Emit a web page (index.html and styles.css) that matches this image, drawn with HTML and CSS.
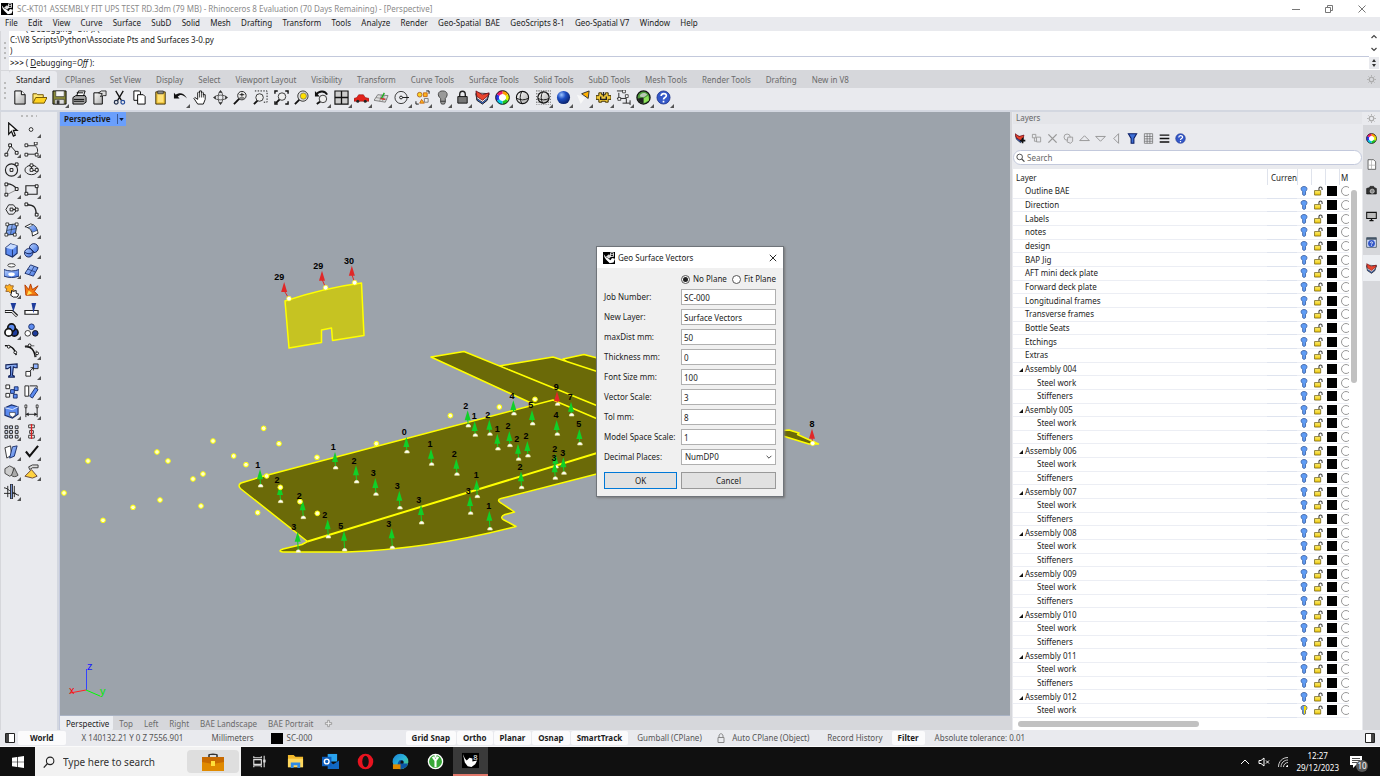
FILE: index.html
```
<!DOCTYPE html>
<html lang="en">
<head>
<meta charset="utf-8">
<title>SC-KT01 ASSEMBLY FIT UPS TEST RD.3dm - Rhinoceros 8</title>
<link rel="stylesheet" href="styles.css">
</head>
<body>
<svg class="sprite" aria-hidden="true">
  <defs>
    <linearGradient id="gBlue" x1="0" y1="0" x2="1" y2="1"><stop offset="0" stop-color="#b9d2ff"/><stop offset="1" stop-color="#3d6fe0"/></linearGradient>
    <radialGradient id="gBall" cx=".35" cy=".3" r=".8"><stop offset="0" stop-color="#9cc4ff"/><stop offset=".4" stop-color="#1d4fc4"/><stop offset="1" stop-color="#061a5c"/></radialGradient>
    <linearGradient id="gYel" x1="0" y1="0" x2="0" y2="1"><stop offset="0" stop-color="#fff27a"/><stop offset="1" stop-color="#ecc400"/></linearGradient>
    <linearGradient id="gGrey" x1="0" y1="0" x2="1" y2="1"><stop offset="0" stop-color="#fff"/><stop offset="1" stop-color="#aaa"/></linearGradient>
    <linearGradient id="gEdge" x1="0" y1="0" x2="1" y2="1"><stop offset="0" stop-color="#1b7fd6"/><stop offset=".5" stop-color="#2bb5d8"/><stop offset="1" stop-color="#5fd45a"/></linearGradient>
  </defs>
  <symbol id="rhino" viewBox="0 0 16 16"><path d="M0 0h16v16H0z" fill="#000"/><path d="M1 3l1 4 2 3 5 5 5-1 2-5-4-1-2 3-4-3-2-1z" fill="#fff"/><path d="M4 6l4-3 3 3-3 3z" fill="#ddd"/><path d="M10 1h4v5h-4zM10 3.500h4" stroke="#fff" fill="none"/></symbol>
  <symbol id="new" viewBox="0 0 16 16"><path d="M3 1h7l4 4v10H3z" fill="url(#gGrey)" stroke="#000"/><path d="M10 1v4h4" fill="#fff" stroke="#000"/></symbol>
  <symbol id="open" viewBox="0 0 16 16"><path d="M1 14V4h4l1 1h6v3" fill="#ffe873" stroke="#705300"/><path d="M1 14l3-6h12l-3 6z" fill="#ffd21f" stroke="#705300"/></symbol>
  <symbol id="save" viewBox="0 0 16 16"><path d="M1 1h14v14H1z" fill="#8a8a3a" stroke="#000"/><path d="M4 1h9v6H4z" fill="#f5f5f5" stroke="#222" stroke-width=".6"/><path d="M3 10h10v5H3z" fill="#ddd" stroke="#222" stroke-width=".6"/><path d="M5 11h3v4H5z" fill="#333"/></symbol>
  <symbol id="print" viewBox="0 0 16 16"><path d="M5 6l2-5h7l-2 6z" fill="#fff" stroke="#000"/><path d="M1 8l3-2h10l1 2v5l-3 2H1z" fill="#aaa" stroke="#000"/><path d="M2 10h11M2 12h11M5 3h7" stroke="#000"/></symbol>
  <symbol id="props" viewBox="0 0 16 16"><path d="M2 3h9v12H2z" fill="url(#gGrey)" stroke="#000"/><path d="M7 3l3-2h5v5h-3L9 7l2-3z" fill="#ddd" stroke="#000" stroke-width=".8"/></symbol>
  <symbol id="cut" viewBox="0 0 16 16"><path d="M4 1l6 10M12 1L6 11" stroke="#111" stroke-width="1.400"/><circle cx="4.500" cy="13" r="2" fill="none" stroke="#222f4a" stroke-width="1.300"/><circle cx="11.500" cy="13" r="2" fill="none" stroke="#234a9a" stroke-width="1.300"/></symbol>
  <symbol id="copy" viewBox="0 0 16 16"><path d="M2 1h6l1 1v9H2z" fill="#fff" stroke="#000"/><path d="M6 5h6l2 2v8H6z" fill="#fff" stroke="#000"/></symbol>
  <symbol id="paste" viewBox="0 0 16 16"><path d="M3 2h10v13H3z" fill="#f3c83e" stroke="#3b2c00"/><path d="M5 4h6v9H5z" fill="#ffe27a"/><path d="M5 1h6v3H5z" fill="#888" stroke="#222" stroke-width=".7"/></symbol>
  <symbol id="undo" viewBox="0 0 16 16"><path d="M1 3v6h6L5 7c3-3 6-2 10 2C12 3 7 2 3 5z" fill="#111"/></symbol>
  <symbol id="hand" viewBox="0 0 16 16"><path d="M5 15L1 9l1-1 3 2V3l1-1 1 1V1h2v2l1-1 1 1v2l2 0v5l-2 5z" fill="#fff" stroke="#111"/><path d="M7 3v5M9 3v5M11 4v4" stroke="#111" stroke-width=".8"/></symbol>
  <symbol id="rotate" viewBox="0 0 16 16"><ellipse cx="8" cy="8" rx="6.500" ry="2.500" fill="none" stroke="#555"/><ellipse cx="8" cy="8" rx="2.500" ry="6.500" fill="none" stroke="#555"/><path d="M0 8l3-2v4zM16 8l-3-2v4zM8 0l2 3H6zM8 16l2-3H6z" fill="#333"/></symbol>
  <symbol id="zoom" viewBox="0 0 16 16"><path d="M7 9l-6 6" stroke="#111" stroke-width="2"/><circle cx="9.500" cy="6" r="4.500" fill="#eee" stroke="#222"/><path d="M7 5h5M9.500 3v4M7 8.500h5" stroke="#111"/></symbol>
  <symbol id="zoomwin" viewBox="0 0 16 16"><path d="M2 1h13v12H10" fill="none" stroke="#111" stroke-dasharray="1.500 1.500"/><path d="M5 11l-4 4" stroke="#111" stroke-width="2"/><circle cx="7" cy="8" r="4" fill="#eee" stroke="#333"/></symbol>
  <symbol id="zoomext" viewBox="0 0 16 16"><path d="M1 4V1h3M12 1h3v3M15 12v3h-3M4 15H1v-3" fill="none" stroke="#111" stroke-width="1.500"/><path d="M6 10l-4 4" stroke="#111" stroke-width="2"/><circle cx="8.500" cy="7" r="4" fill="#eee" stroke="#333"/></symbol>
  <symbol id="zoomsel" viewBox="0 0 16 16"><path d="M6 10l-5 5" stroke="#111" stroke-width="2"/><circle cx="9.500" cy="6.500" r="5.500" fill="#ddd" stroke="#333"/><circle cx="10" cy="6.500" r="3.300" fill="#ffe000" stroke="#555" stroke-width=".6"/></symbol>
  <symbol id="zoomprev" viewBox="0 0 16 16"><path d="M2 5C6 0 12 1 14 5" fill="none" stroke="#111" stroke-width="2"/><path d="M1 1v6h5z" fill="#111"/><path d="M7 12l-4 3" stroke="#111" stroke-width="2"/><circle cx="9.500" cy="9.500" r="4" fill="#eee" stroke="#333"/></symbol>
  <symbol id="views" viewBox="0 0 16 16"><path d="M1 1h14v14H1z" fill="#ccc" stroke="#111" stroke-width="1.200"/><path d="M8 1v14M1 8h14" stroke="#111" stroke-width="1.400"/></symbol>
  <symbol id="car" viewBox="0 0 16 16"><path d="M0 9l3-1 2-3h5l2 3 4 1v3H0z" fill="#e2231a" stroke="#7b0000" stroke-width=".5"/><circle cx="4" cy="12" r="1.600" fill="#222"/><circle cx="12" cy="12" r="1.600" fill="#222"/></symbol>
  <symbol id="cplane" viewBox="0 0 16 16"><path d="M4 5l11 1-3 7-12-2z" fill="#ddd" stroke="#555" stroke-width=".7"/><path d="M2 8l12 2M8 5l-2 7M11 6l-2 6" stroke="#777" stroke-width=".7"/><path d="M7 9l5 1" stroke="#d22" stroke-width="1.500"/><path d="M8 9l3-6" stroke="#2a2" stroke-width="1.500"/></symbol>
  <symbol id="target" viewBox="0 0 16 16"><circle cx="7.500" cy="8" r="6.500" fill="none" stroke="#333"/><circle cx="7.500" cy="8" r="1.500" fill="#fff" stroke="#111"/><path d="M9 8h7" stroke="#111"/></symbol>
  <symbol id="selobj" viewBox="0 0 16 16"><path d="M1 12v3h3M12 1h3v3" fill="none" stroke="#111"/><circle cx="5" cy="5" r="2.500" fill="#ffd21f" stroke="#a63"/><path d="M9 3h4v4H9zM5 14l2-4 3 4z" fill="#ffb31f" stroke="#b50" stroke-width=".8"/><path d="M10 9h4v4h-4z" fill="#eee" stroke="#777"/></symbol>
  <symbol id="bulb" viewBox="0 0 16 16"><path d="M8 1c6 0 6 5 3 8v4l-1 2H7l-1-2V9C2 6 3 1 8 1z" fill="#999" stroke="#444"/><path d="M6 12h5" stroke="#333"/></symbol>
  <symbol id="lock" viewBox="0 0 16 16"><path d="M5 8V5c0-5 6-5 6 0v3" fill="none" stroke="#222" stroke-width="1.500"/><path d="M3 7h10v7H3z" fill="#777" stroke="#111"/></symbol>
  <symbol id="layers" viewBox="0 0 16 16"><path d="M1 4l1 7 6 4 5-4 2-7z" fill="#3a6bd8" stroke="#111"/><path d="M1 3l1 6 6 4 5-4 2-5z" fill="#fff" stroke="#111" stroke-width=".7"/><path d="M1 1l7 4 7-2-1 3-6 5-6-4z" fill="#e8452c" stroke="#601" stroke-width=".8"/></symbol>
  <symbol id="wheel" viewBox="0 0 16 16"><circle cx="8" cy="8" r="4" fill="#fff"/><g fill="none" stroke-width="3.500"><path d="M8 2.500A5.500 5.500 0 0 1 12.800 5.200" stroke="#ff9d00"/><path d="M12.800 5.200A5.500 5.500 0 0 1 12.800 10.800" stroke="#e6ee00"/><path d="M12.800 10.800A5.500 5.500 0 0 1 8 13.500" stroke="#20c820"/><path d="M8 13.500A5.500 5.500 0 0 1 3.200 10.800" stroke="#00c8e8"/><path d="M3.200 10.800A5.500 5.500 0 0 1 3.200 5.200" stroke="#2536e8"/><path d="M3.200 5.200A5.500 5.500 0 0 1 8 2.500" stroke="#ee1a6a"/></g><circle cx="8" cy="8" r="7.300" fill="none" stroke="#111"/></symbol>
  <symbol id="wire" viewBox="0 0 16 16"><circle cx="8" cy="8" r="6.500" fill="url(#gGrey)" stroke="#111" stroke-width="1.200"/><path d="M7 2c-2 4-2 8 0 12M2 9c4 2 8 2 12 0" fill="none" stroke="#111"/></symbol>
  <symbol id="shade" viewBox="0 0 16 16"><path d="M0 1h16M0 4h16M0 7h16M0 10h16M0 13h16M0 16h16" stroke="#555" stroke-dasharray="1.500 1"/><circle cx="8" cy="8" r="6" fill="url(#gGrey)" stroke="#111" stroke-width="1.200"/><path d="M7 2c-2 4-2 8 0 12M2 9c4 2 8 2 12 0" fill="none" stroke="#111"/></symbol>
  <symbol id="ball" viewBox="0 0 16 16"><circle cx="8" cy="8" r="7" fill="url(#gBall)"/></symbol>
  <symbol id="spot" viewBox="0 0 16 16"><path d="M1 5l9 3-5 7z" fill="#f8f8f8"/><path d="M6 4l8-3-1 8z" fill="#ffb000" stroke="#333"/></symbol>
  <symbol id="gear" viewBox="0 0 16 16"><path d="M0 6h3V3h3V5h4V3h3v3h3v4h-3v3h-3v-1H6v1H3v-3H0z" fill="#f0c83a" stroke="#3b2c00"/><path d="M5 7v3h6V7M8 2v5" fill="none" stroke="#222" stroke-width="1.500"/></symbol>
  <symbol id="dims" viewBox="0 0 16 16"><path d="M3 3v6h8v5M1 1h7M1 9h4M7 14h8M15 11v5" fill="none" stroke="#222"/><path d="M7 0h3v3H7zM10 5h3v3h-3zM2 8h3v3H2z" fill="#fff" stroke="#222" stroke-width=".8"/></symbol>
  <symbol id="grass" viewBox="0 0 16 16"><circle cx="8" cy="8" r="7" fill="#4d9a3a" stroke="#111" stroke-width="1.400"/><path d="M4 7c0-4 6-5 8-2L8 8z" fill="#b9c9b5"/><path d="M8 9l5-3 1 5-6 3z" fill="#8fe25a"/><path d="M2 9l6-1v6C4 14 2 12 2 9z" fill="#222"/></symbol>
  <symbol id="help" viewBox="0 0 16 16"><circle cx="8" cy="8" r="7" fill="#3458c8" stroke="#182f88" stroke-width=".8"/><path d="M5.500 6.500C5.500 3 11 3 11 6c0 2-3 2-3 4M8 11.500v1.800" fill="none" stroke="#fff" stroke-width="1.800"/></symbol>

  <symbol id="arrow" viewBox="0 0 16 16"><path d="M5 1v12l3-3 2 5 2-1-2-5h4z" fill="#fff" stroke="#111" stroke-width="1.300"/></symbol>
  <symbol id="point" viewBox="0 0 16 16"><circle cx="7.500" cy="8" r="2" fill="#fff" stroke="#222"/></symbol>
  <symbol id="pline" viewBox="0 0 16 16"><path d="M2 14L7 4l7 8" fill="none" stroke="#222"/><path d="M1 12h3v3H1zM5 2h3v3H5zM12 10h3v3h-3z" fill="#fff" stroke="#111"/></symbol>
  <symbol id="curve" viewBox="0 0 16 16"><path d="M3 4h9M3 13h8c6-1 3-8 1-9" fill="none" stroke="#222"/><path d="M1 2h3v3H1zM1 12h3v3H1zM12 12h3v3h-3zM11 0h3v3h-3z" fill="#fff" stroke="#111" stroke-width=".9"/></symbol>
  <symbol id="circle" viewBox="0 0 16 16"><circle cx="8" cy="8.500" r="6.500" fill="none" stroke="#222" stroke-width="1.200"/><path d="M6.500 7h3v3h-3zM12 1h3v3h-3z" fill="#fff" stroke="#111"/></symbol>
  <symbol id="ellipse" viewBox="0 0 16 16"><ellipse cx="8" cy="8.500" rx="7" ry="5" fill="none" stroke="#222"/><path d="M8 3v6h6" fill="none" stroke="#222"/><path d="M6.500 2h3v3h-3zM6.500 7h3v3h-3zM12 7h3v3h-3z" fill="#fff" stroke="#111" stroke-width=".9"/></symbol>
  <symbol id="arc" viewBox="0 0 16 16"><path d="M2 2v12l12-6" fill="none" stroke="#888"/><path d="M3 2c6 0 9 3 11 6" fill="none" stroke="#222" stroke-width="1.300"/><path d="M1 1h3v3H1zM1 12h3v3H1zM12 6h3v3h-3z" fill="#fff" stroke="#111"/></symbol>
  <symbol id="rect" viewBox="0 0 16 16"><path d="M2 4h12v9H2z" fill="none" stroke="#222" stroke-width="1.200"/><path d="M1 11h3v3H1zM12 3h3v3h-3z" fill="#fff" stroke="#111"/></symbol>
  <symbol id="hex" viewBox="0 0 16 16"><path d="M5 3h5l4 5-4 5H5L2 8z" fill="none" stroke="#222"/><path d="M8 8h5" stroke="#222"/><path d="M6.500 6.500h3v3h-3zM12 6.500h3v3h-3z" fill="#fff" stroke="#111"/></symbol>
  <symbol id="fillet" viewBox="0 0 16 16"><path d="M3 3c8 0 10 3 10 11" fill="none" stroke="#222" stroke-width="1.500"/><path d="M1 1h3v3H1zM12 12h3v3h-3z" fill="#fff" stroke="#111"/></symbol>
  <symbol id="srfpts" viewBox="0 0 16 16"><path d="M4 3l10-1-2 11-10 1z" fill="url(#gBlue)" stroke="#234"/><path d="M9 2L7 13M3 9l10-2" stroke="#234" stroke-width=".7"/><path d="M2 1h3v3H2zM12 1h3v3h-3zM1 12h3v3H1zM10 12h3v3h-3z" fill="#fff" stroke="#111" stroke-width=".8"/></symbol>
  <symbol id="srfcrv" viewBox="0 0 16 16"><path d="M1 5l6-3c5 1 7 5 8 10l-6 3C9 9 6 6 1 5z" fill="#fff" stroke="#222"/><path d="M4 6l6-3c3 2 4 4 4 6l-5 2C8 8 6 6 4 6z" fill="url(#gBlue)" stroke="#234" stroke-width=".6"/></symbol>
  <symbol id="box" viewBox="0 0 16 16"><path d="M2 5l5-4 7 2v8l-5 4-7-3z" fill="#5c8bf0" stroke="#1a2f6b" stroke-width="1.200"/><path d="M2 5l7 2 5-4-7-2z" fill="#c6daff"/><path d="M9 7v8" stroke="#1a2f6b"/></symbol>
  <symbol id="bool" viewBox="0 0 16 16"><circle cx="10.500" cy="5.500" r="4.800" fill="url(#gBlue)" stroke="#12225a"/><circle cx="5" cy="10.500" r="4.500" fill="url(#gBlue)" stroke="#12225a"/><path d="M6 5l5 5M1 10c3 2 6 2 8 0" stroke="#12225a" fill="none"/></symbol>
  <symbol id="extrude" viewBox="0 0 16 16"><ellipse cx="8" cy="2.500" rx="4" ry="1.800" fill="#fff" stroke="#333"/><path d="M0 7c5 2 11 2 16 0v7c-5 2-11 2-16 0z" fill="url(#gBlue)" stroke="#1a2f6b"/><ellipse cx="8" cy="12" rx="3.500" ry="2" fill="#fff"/></symbol>
  <symbol id="mesh" viewBox="0 0 16 16"><path d="M7 2l8 3-5 9-9-3z" fill="url(#gBlue)" stroke="#1a2f6b"/><path d="M11 3.500L5.500 12.500M4 6.500l8 3" stroke="#1a2f6b" stroke-width=".8"/></symbol>
  <symbol id="gears" viewBox="0 0 16 16"><path d="M2 2l2 1 2-2 1 2 3 0-1 3 2 2-3 1-1 2-2-2-3 0 1-3-2-1z" fill="#ffb020" stroke="#963"/><path d="M8 8l2 1 3-1 0 3 3 1-2 3-4 0-3-2 1-2z" fill="#fff" stroke="#111"/></symbol>
  <symbol id="burst" viewBox="0 0 16 16"><path d="M1 2l4 5 2-6 2 6 6-4-4 6 4 4H2z" fill="#f47b12" stroke="#b33b00"/><path d="M3 13L5 8l4 3z" fill="#ffe25a"/></symbol>
  <symbol id="trim" viewBox="0 0 16 16"><path d="M1 9h8l5 5" fill="none" stroke="#222" stroke-width="3.200"/><path d="M1.500 9h7l5 5" fill="none" stroke="#fff" stroke-width="1.200"/><path d="M7 0h6l-3 9z" fill="#1e3c9c"/></symbol>
  <symbol id="split" viewBox="0 0 16 16"><path d="M1 8h14v4H1z" fill="#fff" stroke="#222" stroke-width="1.300"/><path d="M8 0h5l-3 11z" fill="#1e3c9c"/></symbol>
  <symbol id="union" viewBox="0 0 16 16"><g stroke="#111" stroke-width="1.800"><circle cx="11" cy="10" r="4" fill="#1e3c9c"/><circle cx="8" cy="5" r="4" fill="#5c8bf0"/><circle cx="5" cy="10" r="4" fill="#fff"/></g></symbol>
  <symbol id="group3" viewBox="0 0 16 16"><circle cx="8" cy="4" r="3" fill="#5c8bf0" stroke="#1a2f6b"/><circle cx="12" cy="11" r="3" fill="#1e3c9c" stroke="#111"/><circle cx="4" cy="11" r="3" fill="#fff" stroke="#333"/></symbol>
  <symbol id="crv1" viewBox="0 0 16 16"><path d="M1 3c6-1 11 3 12 10" fill="none" stroke="#111" stroke-width="1.500"/><circle cx="5" cy="4" r="1.500" fill="#fff" stroke="#111"/><circle cx="12" cy="10" r="1.500" fill="#fff" stroke="#111"/></symbol>
  <symbol id="crv2" viewBox="0 0 16 16"><path d="M1 4c6-1 10 3 11 11" fill="none" stroke="#111" stroke-width="1.700"/><path d="M1 3h10M13 8v7" stroke="#555"/><circle cx="6" cy="2.500" r="1.500" fill="#fff" stroke="#111"/><circle cx="14" cy="11" r="1.500" fill="#fff" stroke="#111"/></symbol>
  <symbol id="tee" viewBox="0 0 16 16"><path d="M2 2l12-1v4h-2l-2-1-1 9 2 1v1H5v-1l2-1V4L4 6H2z" fill="url(#gBlue)" stroke="#12225a" stroke-width="1.200"/></symbol>
  <symbol id="move" viewBox="0 0 16 16"><path d="M2 9h5v5H2z" fill="#fff" stroke="#222"/><path d="M10 1h5v5h-5z" fill="#8fb2ff" stroke="#222"/><path d="M6 9l4-4M7 5h3v3" fill="none" stroke="#222"/></symbol>
  <symbol id="array" viewBox="0 0 16 16"><path d="M2 1h4v4H2zM2 10h4v4H2z" fill="#fff" stroke="#222"/><path d="M7 6h4v4H7zM11 3h4v4h-4zM10 11h4v4h-4z" fill="#5c8bf0" stroke="#1a2f6b"/></symbol>
  <symbol id="orient" viewBox="0 0 16 16"><path d="M1 2h4v11H1z" fill="#fff" stroke="#222"/><path d="M12 4l3 2-6 9-3-2z" fill="#5c8bf0" stroke="#1a2f6b"/><path d="M6 2h8v3" fill="none" stroke="#222"/></symbol>
  <symbol id="cap" viewBox="0 0 16 16"><path d="M1 4l7-3 7 2v8l-6 4-8-3z" fill="#5c8bf0" stroke="#1a2f6b" stroke-width="1.200"/><path d="M1 4l8 2 6-3" fill="none" stroke="#dce8ff"/><path d="M6 9h6v3l-3 2-3-2z" fill="#fff" stroke="#222" stroke-width=".6"/></symbol>
  <symbol id="dim" viewBox="0 0 16 16"><path d="M2 3v11M14 3v11M2 11h12" stroke="#222"/><path d="M2 11l3-2v4zM14 11l-3-2v4z" fill="#222"/><path d="M1 1h2v3H1zM13 1h2v3h-2z" fill="#fff" stroke="#111" stroke-width=".8"/></symbol>
  <symbol id="grid9" viewBox="0 0 16 16"><path d="M1 2h3v3H1zM6 2h3v3H6zM12 2h3v3h-3zM1 7h3v3H1zM6 7h3v3H6zM1 12h3v3H1zM6 12h3v3H6zM12 12h3v3h-3zM12 7h3v3h-3z" fill="#dfe8ff" stroke="#222"/></symbol>
  <symbol id="align" viewBox="0 0 16 16"><path d="M5 1h6v3H5zM6 7h4v3H6zM5 12h6v3H5z" fill="#fff" stroke="#333"/><path d="M8 0v16" stroke="#d22" stroke-width="1.500"/></symbol>
  <symbol id="flow" viewBox="0 0 16 16"><path d="M1 4l6-2 1 10-5 3z" fill="#fff" stroke="#333"/><path d="M9 3l5-1-3 11-5 2z" fill="url(#gBlue)" stroke="#1a2f6b"/></symbol>
  <symbol id="check" viewBox="0 0 16 16"><path d="M2 8l4 5 9-11" fill="none" stroke="#111" stroke-width="2.200"/></symbol>
  <symbol id="solids" viewBox="0 0 16 16"><path d="M1 5l5-3 4 2v7l-4 2-5-3z" fill="#ccc" stroke="#444"/><path d="M11 4l4 8c-2 2-6 2-7 0z" fill="#aaa" stroke="#444"/></symbol>
  <symbol id="pyra" viewBox="0 0 16 16"><path d="M8 6l6 7-5 2-8-2z" fill="#ffd23f" stroke="#643"/><path d="M5 3l4-2h6v3H9L6 6z" fill="#ddd" stroke="#333"/></symbol>
  <symbol id="gumball" viewBox="0 0 16 16"><path d="M0 4c3 0 5 3 8 4s5 4 8 4M0 10h13M4 2v12M11 2v12" fill="none" stroke="#222"/><path d="M7 0h2v16H7z" fill="#7f9fe8" stroke="#222"/></symbol>

  <symbol id="newlayer" viewBox="0 0 16 16"><path d="M1 4l1 5 6 5 4-4V6z" fill="#3a6bd8" stroke="#222"/><path d="M0 1l6 4 7-2-1 4-4 4-6-4z" fill="#e8452c" stroke="#601"/><path d="M11 7v8M7 11h8" stroke="#111" stroke-width="2.400"/></symbol>
  <symbol id="sublayer" viewBox="0 0 16 16"><path d="M2 2h5v5H2zM5 7v5h4M8 6h6v7H8z" fill="none" stroke="#999" stroke-width="1.300"/></symbol>
  <symbol id="del" viewBox="0 0 16 16"><path d="M2 2l12 12M14 2L2 14" stroke="#999" stroke-width="2"/></symbol>
  <symbol id="dup" viewBox="0 0 16 16"><circle cx="6" cy="6" r="4.500" fill="none" stroke="#999" stroke-width="1.300"/><path d="M7 6h7v6l-3 3-5-2z" fill="#e4e4e8" stroke="#999" stroke-width="1.300"/></symbol>
  <symbol id="up" viewBox="0 0 16 16"><path d="M8 4l7 7H1z" fill="none" stroke="#888" stroke-width="1.200"/></symbol>
  <symbol id="down" viewBox="0 0 16 16"><path d="M8 12l7-7H1z" fill="none" stroke="#888" stroke-width="1.200"/></symbol>
  <symbol id="left" viewBox="0 0 16 16"><path d="M4 8l7-7v14z" fill="none" stroke="#888" stroke-width="1.200"/></symbol>
  <symbol id="filter" viewBox="0 0 16 16"><path d="M2 1h12l-4 7v7H6V8z" fill="#3c6fd8" stroke="#0d1f66" stroke-width="1.600"/></symbol>
  <symbol id="sheet" viewBox="0 0 16 16"><path d="M2 1h12v14H2zM2 5h12M2 8.500h12M2 12h12M6 1v14M10 1v14" fill="none" stroke="#666"/></symbol>
  <symbol id="burger" viewBox="0 0 16 16"><path d="M1 3h14M1 8h14M1 13h14" stroke="#111" stroke-width="2"/></symbol>
  <symbol id="cog" viewBox="0 0 16 16"><circle cx="8" cy="8" r="4" fill="none" stroke="#aaa" stroke-width="2"/><path d="M8 0v3M8 13v3M0 8h3M13 8h3M2.500 2.500l2 2M11.500 11.500l2 2M2.500 13.500l2-2M11.500 4.500l2-2" stroke="#aaa" stroke-width="1.500"/></symbol>
  <symbol id="page" viewBox="0 0 16 16"><path d="M3 1h8l3 3v11H3z" fill="#fff" stroke="#333"/><path d="M8 1v14M3 9h11" stroke="#aaa"/></symbol>
  <symbol id="camera" viewBox="0 0 16 16"><path d="M1 5l4-1 1-2h5l1 2 3 1v8H1z" fill="#333" stroke="#111"/><circle cx="9" cy="9" r="3" fill="#888" stroke="#ddd"/></symbol>
  <symbol id="monitor" viewBox="0 0 16 16"><path d="M1 2h14v9H1z" fill="#bbb" stroke="#111" stroke-width="1.500"/><path d="M5 14h6M8 11v3" stroke="#111" stroke-width="2"/></symbol>
  <symbol id="helpwin" viewBox="0 0 16 16"><path d="M1 1h14v14H1z" fill="#dce5ff" stroke="#234"/><path d="M1 1h14v3H1z" fill="#456"/><circle cx="8" cy="9.500" r="5" fill="#3458c8"/><path d="M6.500 8.500c0-2 3-2 3 0 0 1-1.500 1-1.500 2.500M8 12v1" stroke="#fff" fill="none" stroke-width="1.200"/></symbol>
  <symbol id="rowbulb" viewBox="0 0 8 11"><path d="M4 .6C8 .6 8 4 5.700 6v3.500L4 10.500l-1.500-1V6C0 4 0 .6 4 .6z" fill="#5f9cf5" stroke="#3a5c9c" stroke-width=".9"/></symbol>
  <symbol id="rowbulb2" viewBox="0 0 8 11"><path d="M4 .6C8 .6 8 4 5.700 6v3.500L4 10.500l-1.500-1V6C0 4 0 .6 4 .6z" fill="#5f9cf5" stroke="#555" stroke-width=".9"/><path d="M4 1c3.500 0 3.500 3 1.300 5v3L4 10z" fill="#ffe000"/></symbol>
  <symbol id="rowlock" viewBox="0 0 10 11"><path d="M5.500 5V3c0-2.500 3.500-2.500 3.500 0v1.500" fill="none" stroke="#444" stroke-width="1.200"/><path d="M.6 5h6.800v5H.6z" fill="url(#gYel)" stroke="#7b6a20" stroke-width=".9"/></symbol>
  <symbol id="lens" viewBox="0 0 16 16"><circle cx="9.500" cy="6.500" r="5" fill="none" stroke="currentColor" stroke-width="1.400"/><path d="M6 10l-5 5.500" stroke="currentColor" stroke-width="1.600"/></symbol>
  <symbol id="lensr" viewBox="0 0 16 16"><circle cx="6.500" cy="7" r="5" fill="none" stroke="currentColor" stroke-width="1.600"/><path d="M10 10.500l5 5" stroke="currentColor" stroke-width="2"/></symbol>
</svg>

<div class="app">
  <header class="titlebar">
    <svg class="ic12"><use href="#rhino"/></svg>
    <h1>SC-KT01 ASSEMBLY FIT UPS TEST RD.3dm (79 MB) - Rhinoceros 8 Evaluation (70 Days Remaining) - [Perspective]</h1>
    <div class="winbtns">
      <button aria-label="Minimize"><svg viewBox="0 0 10 10"><path d="M1 5.500h8" stroke="#777"/></svg></button>
      <button aria-label="Restore"><svg viewBox="0 0 10 10"><path d="M1.500 3.500h5v5h-5zM3.500 3V1.500h5v5H7" fill="none" stroke="#777"/></svg></button>
      <button aria-label="Close"><svg viewBox="0 0 10 10"><path d="M1.500 1.500l7 7M8.500 1.500l-7 7" stroke="#777"/></svg></button>
    </div>
  </header>
  <nav class="menubar" aria-label="Main menu">
    <button>File</button><button>Edit</button><button>View</button><button>Curve</button><button>Surface</button><button>SubD</button><button>Solid</button><button>Mesh</button><button>Drafting</button><button>Transform</button><button>Tools</button><button>Analyze</button><button>Render</button><button>Geo-Spatial&nbsp; BAE</button><button>GeoScripts 8-1</button><button>Geo-Spatial V7</button><button>Window</button><button>Help</button>
  </nav>

  <section class="command" aria-label="Command line">
    <div class="grip-v"></div>
    <div class="cmdtext">
      <div class="history">
        <p>&gt;&gt;&gt; ( Debugging=Off ): (</p>
        <p>C:\V8 Scripts\Python\Associate Pts and Surfaces 3-0.py</p>
        <p>)</p>
      </div>
      <p class="prompt"><b>&gt;&gt;&gt;</b> ( <u>D</u>ebugging=<i>Off</i> ):</p>
    </div>
    <div class="cmdscroll">
      <svg viewBox="0 0 10 24"><path d="M2.500 7L5 4.500 7.500 7M2.500 17L5 19.500 7.500 17" fill="none" stroke="#444" stroke-width="1.200"/></svg>
      <svg class="spin" viewBox="0 0 10 12"><path d="M3 5l2-3 2 3zM3 7l2 3 2-3z" fill="#333"/></svg>
    </div>
  </section>

  <section class="toolbars">
    <div class="grip-v"></div>
    <div class="toolbody">
      <div class="tabrow">
        <div class="tabs" role="tablist">
          <button class="on">Standard</button><button>CPlanes</button><button>Set View</button><button>Display</button><button>Select</button><button>Viewport Layout</button><button>Visibility</button><button>Transform</button><button>Curve Tools</button><button>Surface Tools</button><button>Solid Tools</button><button>SubD Tools</button><button>Mesh Tools</button><button>Render Tools</button><button>Drafting</button><button>New in V8</button>
        </div>
        <button class="tabcog" aria-label="Options"><svg class="ic9"><use href="#cog"/></svg></button>
      </div>
      <div class="mainbar" id="mainbar"></div>
    </div>
  </section>

  <main class="work">
    <aside class="palette">
      <div class="grip-h"></div>
      <div class="palgrid" id="palette"></div>
    </aside>

    <section class="view">
      <div class="canvas">
        <svg class="scene" id="scene" viewBox="60 112 950 603" preserveAspectRatio="xMinYMin meet">
          <g class="edge" stroke-linejoin="round">
            <path class="lit" d="M285 301Q324 288 361.500 283L364 335.500 332.500 340.500 331.500 328 321.500 330 321.500 342.500 289 348Z"/>
            <path class="dark" d="M563 359L584 354.500 620 364V400Z"/>
            <path class="dark" d="M499 366L553 357 620 379V420L560 392Z"/>
            <path class="dark" d="M431 357L464 351.500 620 415V440L530 402.500Z"/>
            <path class="dark" d="M783 430.500L789 430 799 433 797.500 434.500 818.500 444 809 444 783 436Z"/>
            <path class="dark" d="M241 483L264 476 553 400 620 428.500V468L501 498.500Q496 500 501 503L514.500 512 505 514.500Q499 517 504 520L516 526.500Q430 549 347 552H283Q277 551 283 549L302 544.500 307.500 541.500 241 489Q237 485.500 241 483Z"/>
            <path class="thick" d="M307.500 541.500L620 446"/>
          </g>
          <g id="marks" transform="translate(230 370) scale(.33333)"></g>
          <g class="axes"><path d="M86.500 690V669" stroke="#3344ff"/><path d="M86 690l-16 3" stroke="#f22"/><path d="M86 690l14 6" stroke="#0f0"/><text x="87" y="670" fill="#1a1aff">z</text><text x="69" y="694" fill="#f01010">x</text><text x="100" y="695" fill="#00e800">y</text></g>
        </svg>
        <div class="vlabel"><button>Perspective</button><button class="drop" aria-label="Viewport menu"><svg viewBox="0 0 6 4"><path d="M0 0h6L3 4z" fill="#0c1c3c"/></svg></button></div>

        <form class="dialog" aria-label="Geo Surface Vectors">
          <header><svg class="ic12"><use href="#rhino"/></svg><h2>Geo Surface Vectors</h2><button type="button" aria-label="Close"><svg viewBox="0 0 10 10"><path d="M1 1l8 8M9 1L1 9" stroke="#222" stroke-width="1.200"/></svg></button></header>
          <div class="fields">
            <div class="radios"><label><input type="radio" name="plane" checked>No Plane</label><label><input type="radio" name="plane">Fit Plane</label></div>
            <label for="f1">Job Number:</label><input id="f1" value="SC-000">
            <label for="f2">New Layer:</label><input id="f2" value="Surface Vectors">
            <label for="f3">maxDist mm:</label><input id="f3" value="50">
            <label for="f4">Thickness mm:</label><input id="f4" value="0">
            <label for="f5">Font Size mm:</label><input id="f5" value="100">
            <label for="f6">Vector Scale:</label><input id="f6" value="3">
            <label for="f7">Tol mm:</label><input id="f7" value="8">
            <label for="f8">Model Space Scale:</label><input id="f8" value="1">
            <label for="f9">Decimal Places:</label>
            <div class="combo"><select id="f9"><option>NumDP0</option></select><svg viewBox="0 0 10 10"><path d="M2 3.500l3 3 3-3" fill="none" stroke="#444" stroke-width="1.200"/></svg></div>
            <button type="button" class="primary">OK</button><button type="button">Cancel</button>
          </div>
        </form>
      </div>
      <div class="vtabs" role="tablist"><button class="on">Perspective</button><button>Top</button><button>Left</button><button>Right</button><button>BAE Landscape</button><button>BAE Portrait</button><button aria-label="Add viewport"><svg class="ic9" viewBox="0 0 10 10"><path d="M4 1.500h2V4h2.500v2H6v2.500H4V6H1.500V4H4z" fill="#eee" stroke="#888" stroke-width=".8"/></svg></button></div>
    </section>

    <section class="panel">
      <div class="phead"><h2>Layers</h2></div>
      <div class="ptools" id="ptools"></div>
      <label class="psearch"><svg class="ic9"><use href="#lensr"/></svg><input placeholder="Search" aria-label="Search layers"></label>
      <div class="listbox">
        <div class="listview">
          <table>
            <colgroup><col><col class="c-cur"><col class="c-ic"><col class="c-ic"><col class="c-ic"><col class="c-m"></colgroup>
            <thead><tr><th>Layer</th><th>Curren</th><th></th><th></th><th></th><th>M</th></tr></thead>
            <tbody id="rows"></tbody>
          </table>
        </div>
        <div class="vthumb"></div>
        <div class="hthumb"></div>
      </div>
    </section>
    <aside class="rail">
      <button class="railcog" aria-label="Panel options"><svg class="ic9"><use href="#cog"/></svg></button>
      <button aria-label="Color"><svg class="ic12"><use href="#wheel"/></svg></button>
      <button aria-label="Properties"><svg class="ic12"><use href="#page"/></svg></button>
      <button aria-label="Rendering"><svg class="ic12"><use href="#camera"/></svg></button>
      <button aria-label="Display"><svg class="ic12"><use href="#monitor"/></svg></button>
      <button aria-label="Help"><svg class="ic12"><use href="#helpwin"/></svg></button>
      <button class="on" aria-label="Layers"><svg class="ic12"><use href="#layers"/></svg></button>
    </aside>
  </main>

  <footer class="status">
    <button class="side" aria-label="Left sidebar"><svg viewBox="0 0 10 10"><path d="M.5.5h9v9h-9z" fill="#fff" stroke="#222"/><path d="M1 1h3v8H1z" fill="#444"/></svg></button>
    <button class="on world">World</button>
    <span class="coord">X 140132.21 Y 0 Z 7556.901</span>
    <span class="units">Millimeters</span>
    <span class="layer"><i></i>SC-000</span>
    <button class="on">Grid Snap</button><button class="on">Ortho</button><button class="on">Planar</button><button class="on">Osnap</button><button class="on">SmartTrack</button>
    <button class="gum">Gumball (CPlane)</button>
    <button class="auto"><svg viewBox="0 0 8 10"><path d="M2 4.500V3c0-3 4-3 4 0v1.500M1 4.500h6v5H1z" fill="none" stroke="#888"/></svg>Auto CPlane (Object)</button>
    <button class="rec">Record History</button>
    <button class="on">Filter</button>
    <span class="tol">Absolute tolerance: 0.01</span>
    <button class="side end" aria-label="Right sidebar"><svg viewBox="0 0 10 10"><path d="M.5.5h9v9h-9z" fill="#fff" stroke="#222"/><path d="M6 1h3v8H6z" fill="#444"/></svg></button>
  </footer>

  <div class="taskbar">
    <button class="start" aria-label="Start"><svg viewBox="0 0 12 12"><path d="M0 1.800l5-.8v4.700H0zM5.700 1L12 0v5.700H5.700zM0 6.300h5V11l-5-.8zM5.700 6.300H12V12l-6.300-1z" fill="#fff"/></svg></button>
    <div class="tsearch"><svg class="ic12"><use href="#lens"/></svg><input placeholder="Type here to search" aria-label="Type here to search">
      <span class="case"><svg viewBox="0 0 24 18"><path d="M8 4V2c0-1 8-1 8 0v2" fill="none" stroke="#333" stroke-width="1.600"/><path d="M1 4h22v14H1z" fill="#e08a00"/><path d="M1 4h22v5l-11 2L1 9z" fill="#c86a00"/><path d="M10 8h4v5h-4z" fill="#ffdf3a"/></svg></span></div>
    <div class="apps">
      <button class="tview" aria-label="Task view"><svg viewBox="0 0 18 18"><path d="M4 3.500V5h8V3.500M4 15v-1.500h8V15M4 7h8v5H4zM15 3v12" fill="none" stroke="#ddd" stroke-width="1.200"/><path d="M14 7h2.500v3H14z" fill="#ddd"/></svg></button>
      <button aria-label="File Explorer"><svg viewBox="0 0 18 18"><path d="M1 2h6l2 2h8v11H1z" fill="#f2b92b"/><path d="M1 6h16v9H1z" fill="#ffd85e"/><path d="M4 10h10v6h-3v-3H7v3H4z" fill="#2f8be6"/></svg></button>
      <button aria-label="Outlook"><svg viewBox="0 0 18 18"><path d="M6 1h10v8H6z" fill="#2aa3ee"/><path d="M6 8l6 4 6-4v9H6z" fill="#1168c4"/><path d="M0 4h10v10H0z" fill="#0f5fbd"/><circle cx="5" cy="9" r="2.500" fill="none" stroke="#fff" stroke-width="1.500"/></svg></button>
      <button aria-label="Opera"><svg viewBox="0 0 18 18"><circle cx="9" cy="9" r="8.200" fill="#e8131f"/><ellipse cx="9" cy="9" rx="3.400" ry="6" fill="#111"/></svg></button>
      <button aria-label="Edge"><svg viewBox="0 0 18 18"><circle cx="9" cy="9" r="8.300" fill="url(#gEdge)"/><path d="M7 9c2-3 7-1 5 2h5c-1 4-5 6-8 6-3-2-4-5-2-8z" fill="#0b55a5"/><path d="M9 9c1-2 4-1 3 2H9z" fill="#111"/><path d="M1 12h8v5H1z" fill="#e08a00"/></svg></button>
      <button aria-label="Green app"><svg viewBox="0 0 18 18"><circle cx="9" cy="9" r="8.200" fill="#fff"/><circle cx="9" cy="9" r="6.800" fill="#37a837"/><path d="M9 15V7M6 4l3 4 3-4M9 2v3" fill="none" stroke="#fff" stroke-width="2.200"/></svg></button>
      <button class="active" aria-label="Rhino 8"><svg viewBox="0 0 18 18"><path d="M0 1h18v16H0z" fill="#000"/><path d="M1 2l2 5 2 2 3-3 3 1 0 3 5-1-2 4-4 3-4-1-3-4z" fill="#fff"/><text x="12" y="8" font-size="8" fill="#fff">8</text></svg></button>
    </div>
    <div class="tray">
      <svg viewBox="0 0 12 12"><path d="M2 8l4-4 4 4" fill="none" stroke="#fff"/></svg>
      <svg viewBox="0 0 12 12"><path d="M1 4.500h2L6 2v8L3 7.500H1zM8 4.500l3 3M11 4.500l-3 3" fill="none" stroke="#fff"/></svg>
      <svg viewBox="0 0 12 12"><path d="M1.500 11C1.500 5.500 5.500 1.500 11 1.500M4 11c0-4 3-7 7-7M6.500 11C6.500 8.500 8.500 6.500 11 6.500" fill="none" stroke="#ccc"/><path d="M9 11c0-1 1-2 2-2v2z" fill="#fff"/></svg>
      <time><span>12:27</span><span>29/12/2023</span></time>
      <button class="notif" aria-label="Notifications"><svg viewBox="0 0 12 12"><path d="M0 0h12v9H6l-3 3V9H0z" fill="#fff"/><path d="M2 2.500h8M2 4.500h8M2 6.500h5" stroke="#222" stroke-width=".8"/></svg><b>10</b></button>
    </div>
  </div>
</div>
<script src="app.js"></script>
</body>
</html>
```
FILE: styles.css
```
* { box-sizing: border-box; margin: 0; padding: 0; }
body { font: 8px/14px "Noto Sans", "Open Sans", sans-serif; color: #1c1c1c; background: #e9eaee; }
button, input, select { font: inherit; color: inherit; background: none; border: 0; border-radius: 0; outline: 0; }
h1, h2 { font: inherit; }
svg { display: block; flex: none; }
.sprite { position: absolute; width: 0; height: 0; }
.ic12 { width: 12px; height: 12px; }
.ic9 { width: 9px; height: 9px; }
.app { display: flex; flex-direction: column; height: 100vh; overflow: hidden; }

.titlebar { display: flex; align-items: center; gap: 4px; padding: 1px 0 0 1px; background: #fff; color: #8b8b8b; line-height: 16px; }
.winbtns { display: flex; gap: 23px; margin-left: auto; padding-right: 13px; }
.winbtns svg { width: 10px; height: 10px; }
.menubar { display: flex; justify-content: space-between; max-width: 703px; padding-bottom: 2px; line-height: 12px; }
.menubar button { padding: 0 5px; white-space: nowrap; }

.command { display: flex; background: #fff; height: 39px; }
.grip-v { flex: none; width: 9px; background: #e9eaee; border-left: 1px solid #d6d7db; display: grid; place-items: center; }
.grip-v::before { content: ""; width: 2px; height: 17px; background: repeating-linear-gradient(#bbb 0 2px, transparent 2px 5px); }
.cmdtext { flex: 1; display: flex; flex-direction: column; }
.history { flex: 1; display: flex; flex-direction: column; justify-content: flex-end; overflow: hidden; line-height: 11px; padding-left: 1px; border-bottom: 1px solid #c3c9dc; }
.prompt { padding: 0 0 2px 1px; line-height: 11px; }
.prompt b { font-weight: 600; }
.cmdscroll { width: 11px; }
.cmdscroll svg { width: 10px; height: 24px; }
.cmdscroll .spin { height: 12px; margin-top: 2px; background: #e9eaee; }

.toolbars { display: flex; border-bottom: 2px solid #d3d7e0; border-top: 1px solid #d6d7db; }
.toolbody { flex: 1; }
.tabrow { display: flex; justify-content: space-between; background: #d6d7db; color: #6b6b6b; line-height: 17px; }
.tabs { display: flex; justify-content: space-between; width: 847px; }
.tabs button { padding: 0 7px; white-space: nowrap; }
.tabs .on { background: #e9eaee; color: #1c1c1c; border-radius: 3px 3px 0 0; }
.tabcog { padding: 0 4px; }
.mainbar { display: grid; grid-template-columns: repeat(33, 1fr); width: 665px; }
.tool { position: relative; display: grid; place-items: center; }
.mainbar .tool { height: 22px; padding-bottom: 4px; }
.tool svg { width: 15px; height: 15px; }
.tool.more::after { content: ""; position: absolute; right: 0; bottom: 2px; border: solid transparent; border-width: 2px; border-right-color: #555; border-bottom-color: #555; }

.work { flex: 1; min-height: 0; display: grid; grid-template-columns: 59px 1fr 351px 17px; }
.palette { border-left: 1px solid #d6d7db; border-right: 2px solid #d3d7e0; }
.grip-h { height: 7px; display: grid; place-items: center; }
.grip-h::before { content: ""; width: 16px; height: 2px; background: repeating-linear-gradient(90deg, #bbb 0 2px, transparent 2px 5px); }
.palgrid { display: grid; grid-template-columns: repeat(2, 20px); grid-template-rows: repeat(19, 1fr); height: 383px; }
.palgrid .tool { width: 20px; }
.palgrid .tool.more::after { bottom: 1px; }

.view { display: flex; flex-direction: column; min-width: 0; border-left: 1px solid #c3c9dc; background: #d6d7db; }
.canvas { position: relative; flex: 1; min-height: 0; background: #9ca3ab; overflow: hidden; border-bottom: 1px solid #a9b3c4; margin-right: 2px; }
.scene { width: 100%; height: 100%; }
.lit { fill: #c6c322; stroke: #ffff00; }
.dark { fill: #6b6a08; stroke: #ffff00; }
.edge path { stroke-width: 1.5px; }
.thick { stroke: #ffff00; }
.edge .thick { stroke-width: 2px; }
.mark { font: bold 27px "Liberation Sans", Arial, sans-serif; text-anchor: middle; }
.axes text { font: 11px "Liberation Sans", Arial, sans-serif; }
.axes path { stroke-width: 1px; }
.vlabel { position: absolute; left: 0; top: 0; display: flex; background: #6a9ffc; font-weight: 700; line-height: 14px; }
.vlabel button { padding: 0 6px 0 4px; }
.vlabel .drop { padding: 0 1px; border-left: 1px solid #3b5a96; margin: 2px 1px 2px 0; display: grid; place-items: center; }
.vlabel svg { width: 5px; height: 3px; }

.dialog { position: absolute; left: 536px; top: 134px; width: 188px; background: #f0f0f0; border: 1px solid #6f747a; box-shadow: 1px 1px 2px #777; }
.dialog header { display: flex; align-items: center; gap: 3px; height: 21px; padding: 0 6px; background: #fff; }
.dialog header button { margin-left: auto; }
.dialog header svg:not(.ic12) { width: 8px; height: 8px; }
.fields { display: grid; grid-template-columns: 73px 95px; column-gap: 4px; row-gap: 4px; padding: 5px 7px 7px; }
.fields > label { line-height: 16px; white-space: nowrap; }
.fields > input, .combo { height: 16px; background: #fff; border: 1px solid #b0b0b0; }
.fields > input { width: 95px; padding: 0 2px; line-height: 13px; }
.radios { grid-column: 2; display: flex; justify-content: space-between; line-height: 12px; }
.radios label { display: flex; align-items: center; gap: 3px; white-space: nowrap; }
.radios input { appearance: none; width: 9px; height: 9px; border: 1px solid #555; border-radius: 50%; background: #fff; display: grid; place-items: center; }
.radios input:checked::before { content: ""; width: 5px; height: 5px; border-radius: 50%; background: #222; }
.combo { position: relative; }
.combo select { appearance: none; display: block; width: 100%; height: 14px; padding: 0 3px; }
.combo svg { position: absolute; right: 2px; top: 3px; width: 8px; height: 8px; pointer-events: none; }
.fields > button { height: 17px; margin-top: 3px; background: #e1e1e1; border: 1px solid #999; }
.fields > button.primary { border-color: #0078d7; }

.vtabs { display: flex; color: #6b6b6b; line-height: 15px; }
.vtabs button { padding: 0 5px 0 6px; display: flex; align-items: center; }
.vtabs .on { background: #eceef2; color: #1c1c1c; border-radius: 0 0 3px 3px; padding-right: 4px; }

.panel { display: flex; flex-direction: column; min-width: 0; min-height: 0; padding: 0 1px; }
.phead { padding: 0 3px; color: #666; background: #e4e5e9; line-height: 12px; }
.ptools { display: flex; gap: 4px; padding: 9px 2px 6px 1px; }
.ptools button { display: grid; place-items: center; width: 12px; }
.ptools svg { width: 11px; height: 11px; }
.psearch { display: flex; align-items: center; gap: 2px; margin-bottom: 4px; padding: 0 2px; height: 15px; border: 1px solid #c3c9dc; border-radius: 8px; background: #fff; color: #444; }
.psearch input { flex: 1; min-width: 0; }
.psearch input::placeholder { color: #666; }
.listbox { flex: 1; min-height: 0; display: grid; grid-template-columns: 336px 1fr; grid-template-rows: 1fr 13px; background: #fff; }
.listview { min-height: 0; overflow: hidden; }
table { width: 100%; height: 100%; border-collapse: separate; border-spacing: 0; table-layout: fixed; }
.c-cur { width: 30px; }
.c-ic { width: 14px; }
.c-m { width: 10px; }
th { height: 16px; font-weight: 400; text-align: left; padding-left: 3px; border-left: 1px solid #dfe3ec; overflow: hidden; white-space: nowrap; line-height: 15px; }
th:first-child { border-left: 0; }
th:last-child { padding-left: 1px; }
td { line-height: 12px; border-bottom: 1px solid #eceef4; white-space: nowrap; overflow: hidden; padding: 0; }
td:nth-child(2) { border-bottom-color: #dfe4ef; }
td.n { padding-left: 12px; }
td.g { padding-left: 6px; }
td.g::before { content: ""; display: inline-block; margin-right: 2px; border: solid transparent; border-width: 2px; border-right-color: #111; border-bottom-color: #111; }
td.k { padding-left: 24px; }
td svg { margin: 0 auto; }
.bulb { width: 8px; height: 10px; }
.lock { width: 9px; height: 10px; }
.sw { display: block; width: 10px; height: 10px; margin-left: 2px; background: #000; }
.ring { display: block; width: 10px; height: 10px; margin-left: 2px; border: 1px solid #999; border-radius: 50%; }
.vthumb { width: 6px; height: 193px; margin: 21px 0 0 2px; border-radius: 3px; background: #c1c1c1; }
.hthumb { width: 181px; height: 6px; margin: 3px 0 0 5px; border-radius: 3px; background: #c1c1c1; }
.rail { background: #d6d7db; display: flex; flex-direction: column; }
.rail button { height: 26px; display: grid; place-items: center; }
.rail .railcog { height: 13px; background: #e9eaee; }
.rail .on { background: #eceef2; }
.rail .ic12 { width: 11px; height: 11px; }

.status { display: flex; align-items: center; padding: 1px 5px; color: #555; background: #e9eaee; border-bottom: 1px solid #fafafa; line-height: 14px; white-space: nowrap; }
.status svg { width: 10px; height: 10px; }
.status .on { background: #fbfbfc; color: #1c1c1c; font-weight: 700; padding: 0 6px; margin-right: 1px; border-radius: 2px; }
.status .world { margin-left: 3px; padding: 0 12px; }
.coord { width: 130px; margin-left: 15px; }
.units { width: 59px; }
.layer { display: flex; align-items: center; gap: 4px; width: 135px; }
.layer i { width: 12px; height: 11px; background: #000; }
.gum { width: 88px; padding-left: 8px; text-align: left; }
.auto { display: flex; align-items: center; gap: 7px; margin-right: 18px; }
.status .auto svg { width: 8px; height: 10px; }
.rec { margin-right: 9px; }
.tol { margin-left: 9px; }
.end { margin-left: auto; }

.taskbar { display: flex; height: 29px; background: #101010; color: #fff; }
.start { width: 35px; display: grid; place-items: center; }
.start svg { width: 12px; height: 12px; }
.tsearch { display: flex; align-items: center; gap: 8px; width: 206px; padding: 1px 2px 1px 8px; background: #f2f2f2; color: #222; font-size: 10px; }
.tsearch input { flex: 1; min-width: 0; }
.tsearch input::placeholder { color: #333; }
.case { display: grid; place-items: center; width: 52px; height: 23px; border-radius: 4px; background: #dedede; }
.case svg { width: 24px; height: 18px; }
.apps { display: flex; }
.apps button { width: 35px; display: grid; place-items: center; }
.apps .tview { width: 37px; padding-right: 3px; }
.apps svg { width: 17px; height: 17px; }
.apps .active { background: #3a3a3a; border-bottom: 2px solid #e0776a; }
.tray { margin-left: auto; display: flex; align-items: center; gap: 7px; padding-right: 12px; }
.tray svg { width: 12px; height: 12px; }
.tray time { display: flex; flex-direction: column; align-items: center; line-height: 12px; }
.notif { position: relative; margin-left: 4px; padding: 0 6px 0 0; }
.notif b { position: absolute; right: 0; top: 4px; width: 12px; height: 12px; border-radius: 50%; background: #555; font: 8px/12px "Noto Sans", sans-serif; }
```
FILE: app.js
```
const svg = (id, cls = '') => `<svg class="${cls}"><use href="#${id}"/></svg>`;

// Toolbar entries: a trailing "+" marks a tool with a flyout.
const tool = name => {
  const id = name.replace('+', '');
  return `<button class="tool${name.endsWith('+') ? ' more' : ''}" aria-label="${id}">${svg(id)}</button>`;
};
const main = 'new open save+ print props cut copy paste undo+ hand rotate zoom zoomwin zoomext zoomsel zoomprev+ views+ car+ cplane+ target+ selobj+ bulb+ lock+ layers+ wheel+ wire shade+ ball+ spot+ gear+ dims+ grass+ help+';
document.getElementById('mainbar').innerHTML = main.split(' ').map(tool).join('');

const side = 'arrow point+ pline+ curve+ circle+ ellipse+ arc+ rect+ hex+ fillet+ srfpts+ srfcrv+ box+ bool+ extrude+ mesh+ gears+ burst trim split union+ group3 crv1 crv2+ tee move+ array orient+ cap+ dim+ grid9+ align+ flow+ check+ solids+ pyra+ gumball+';
document.getElementById('palette').innerHTML = side.split(' ').map(tool).join('');

const ptools = 'newlayer sublayer del dup up down left filter sheet burger help';
document.getElementById('ptools').innerHTML = ptools.split(' ').map(i => `<button aria-label="${i}">${svg(i)}</button>`).join('');

// Layer tree
const layers = ['Outline BAE', 'Direction', 'Labels', 'notes', 'design', 'BAP Jig', 'AFT mini deck plate', 'Forward deck plate', 'Longitudinal frames', 'Transverse frames', 'Bottle Seats', 'Etchings', 'Extras'].map(t => ['n', t]);
['Assembly 004', 'Asembly 005', 'Assembly 006', 'Assembly 007', 'Assembly 008', 'Assembly 009', 'Assembly 010', 'Assembly 011'].forEach(t => layers.push(['g', t], ['k', 'Steel work'], ['k', 'Stiffeners']));
layers.push(['g', 'Assembly 012'], ['k', 'Steel work']);
document.getElementById('rows').innerHTML = layers.map(([c, t], i) =>
  `<tr><td class="${c}">${t}</td><td></td><td>${svg(i === layers.length - 1 ? 'rowbulb2' : 'rowbulb', 'bulb')}</td><td>${svg('rowlock', 'lock')}</td><td><span class="sw"></span></td><td><span class="ring"></span></td></tr>`).join('');

// Surface vectors: [value, base x, base y, label x, label y, red]
const vectors = [
  [1,92,347,83,284],[2,152,394,141,331],[2,220,442,208,377],[3,205,543,191,471],[2,295,500,284,434],[5,344,539,332,468],
  [3,487,532,476,461],[1,317,293,310,232],[2,380,335,372,272],[3,438,372,430,310],[3,510,413,502,348],[3,575,458,566,391],
  [0,531,245,523,187],[1,605,282,600,222],[2,681,312,673,252],[1,742,379,739,315],[3,722,429,715,364],[1,780,476,776,408],
  [2,875,352,870,290],[2,715,167,707,107],[1,736,195,733,139],[2,780,192,773,135],[1,804,236,802,177],[2,840,226,834,169],
  [2,866,267,860,207],[2,894,257,888,199],[4,852,131,846,77],[5,908,161,902,106],[9,983,102,979,50,1],[7,1025,134,1021,81],
  [4,982,192,978,136],[5,1050,221,1046,163],[2,978,290,974,237],[3,976,324,972,263],[3,1002,309,998,248],
  [29,177,-214,148,-278,1],[29,287,-247,265,-312,1],[30,374,-262,357,-327,1],[8,1748,220,1746,162,1]
];
const points = [[101,175],[147,221],[11,258],[48,284],[261,262],[110,318],[151,352],[210,395],[262,430],[83,428],[439,221],[661,137],[808,111],[915,88],[-426,273],[-219,246],[-186,273],[-51,213],[-210,390],[-291,412],[-381,451],[-498,369],[-111,327],[-81,312],[-87,408]];
const dots = points.map(([x, y]) => `<circle cx="${x}" cy="${y}" r="7" fill="#ffffd0" stroke="#ffff00" stroke-width="3"/>`).join('');
const arrows = vectors.map(([v, x, y, lx, ly, red]) => {
  const c = red ? '#e02828' : '#10d028';
  const tx = v > 9 ? (x + lx) / 2 : x - 2;
  const top = ly + 14;
  const base = red && v !== 9 ? `<circle cx="${x}" cy="${y}" r="7" fill="#fff" stroke="#ff0" stroke-width="2"/>` : `<path d="M${x - 7} ${y + 4}a7 8 0 0 1 14 0z" fill="#fff" stroke="#e8e8a0" stroke-width="2"/>`;
  return `<path d="M${tx} ${top + 26}L${x} ${y}" stroke="${c}" stroke-width="3"/><path d="M${tx} ${top}L${tx + 9} ${top + 30}H${tx - 9}z" fill="${c}"/>${base}<text class="mark" x="${lx}" y="${ly + 9}">${v}</text>`;
}).join('');
document.getElementById('marks').innerHTML = arrows + dots;
```
